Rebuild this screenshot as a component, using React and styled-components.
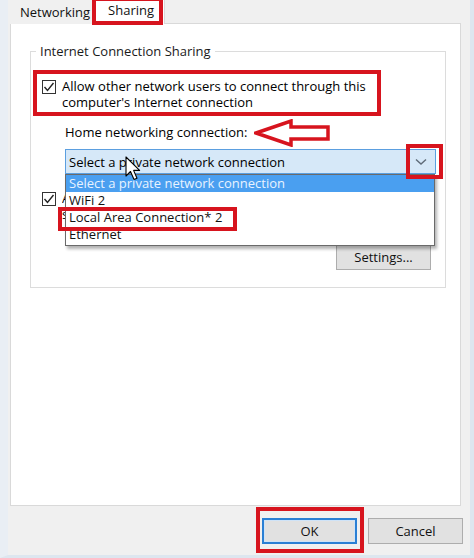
import React from 'react';
import styled, { createGlobalStyle } from 'styled-components';

const GlobalStyle = createGlobalStyle`
	* { box-sizing: border-box; }
	body {
		margin: 0;
		background: #f0f0f0;
		font-family: 'Open Sans', 'Noto Sans', sans-serif;
		font-size: 13px;
		color: #000;
	}
`;

const App = () => {
	return (
		<Window>
			<GlobalStyle />
			<TabStrip>
				<Tab>Networking</Tab>
				<Tab $active>Sharing</Tab>
			</TabStrip>

			<TabPanel>
				<GroupBox>
					<Legend>Internet Connection Sharing</Legend>
					<GroupBody>
						<CheckRow>
							<CheckBox>
								<CheckMark />
							</CheckBox>
							<CheckText>
								Allow other network users to connect through this
								<br />
								computer's Internet connection
							</CheckText>
						</CheckRow>

						<Indent>
							<FieldLabel>Home networking connection:</FieldLabel>
							<ComboWrap>
								<Combo>
									<ComboText>Select a private network connection</ComboText>
									<ComboButton>
										<svg width="12" height="8" viewBox="0 0 12 8">
											<polyline points="1,1.5 6,6 11,1.5" fill="none" stroke="#5f6b78" strokeWidth="1.4" />
										</svg>
									</ComboButton>
								</Combo>
								<DropList>
									<DropItem $selected>Select a private network connection</DropItem>
									<DropItem>WiFi 2</DropItem>
									<DropItem>Local Area Connection* 2</DropItem>
									<DropItem>Ethernet</DropItem>
								</DropList>
							</ComboWrap>
						</Indent>

						{/* label mostly hidden under the open drop-down list */}
						<CheckRow $second>
							<CheckBox>
								<CheckMark />
							</CheckBox>
							<CheckText $clipped>
								Allow other network users to control or disable the
								<br />
								shared Internet connection
							</CheckText>
						</CheckRow>

						<ButtonRow>
							<Button>Settings...</Button>
						</ButtonRow>
					</GroupBody>
				</GroupBox>
			</TabPanel>

			<Footer>
				<Button $default>OK</Button>
				<Button>Cancel</Button>
			</Footer>

			<Callout $left={92} $top={-3} $w={71} $h={28} />
			<Callout $left={33} $top={70} $w={348} $h={46} />
			<Callout $left={406} $top={144} $w={37} $h={35} />
			<Callout $left={58} $top={207} $w={179} $h={24} />
			<Callout $left={256} $top={507} $w={108} $h={46} />

			<Arrow width="78" height="28" viewBox="0 0 78 28">
				<polygon
					points="2,14 37,2 37,8 74,8 74,20 37,20 37,26"
					fill="#fff"
					stroke="#d7141e"
					strokeWidth="3.5"
					strokeLinejoin="miter"
				/>
			</Arrow>

			<Cursor width="16" height="26" viewBox="0 0 16 26">
				<path
					d="M1 1 L1 20 L5.5 15.5 L9 23.5 L12 22.2 L8.6 14.4 L14.6 14.4 Z"
					fill="#fff"
					stroke="#000"
					strokeWidth="1.1"
					strokeLinejoin="round"
				/>
			</Cursor>
		</Window>
	);
};

const CheckMark = () => (
	<svg width="12" height="12" viewBox="0 0 12 12">
		<polyline points="1.5,6 4.5,9.5 10.5,2" fill="none" stroke="#222" strokeWidth="1.4" />
	</svg>
);

const Window = styled.div`
	position: relative;
	width: 474px;
	height: 558px;
	overflow: hidden;
	background: #f0f0f0;
	border-left: 8px solid #e9eef4;
	border-right: 4px solid #dde6ef;
	border-bottom: 3px solid #dde6ef;
	display: flex;
	flex-direction: column;
`;

const TabStrip = styled.div`
	height: 24px;
	margin-left: 2px;
	display: flex;
	align-items: flex-end;
`;

const Tab = styled.div`
	height: ${(p) => (p.$active ? '26px' : '22px')};
	padding: ${(p) => (p.$active ? '0 10px 4px 12px' : '0 4px 2px 10px')};
	margin-left: ${(p) => (p.$active ? '1px' : '0')};
	display: flex;
	align-items: center;
	background: ${(p) => (p.$active ? '#fff' : '#f0f0f0')};
	border: ${(p) => (p.$active ? '1px solid #d9d9d9' : 'none')};
	border-bottom: none;
	color: #111;
	position: relative;
	z-index: 1;
`;

const TabPanel = styled.div`
	height: 483px;
	margin: -1px 9px 0 2px;
	background: #fff;
	border: 1px solid #d9d9d9;
	padding: 18px 14px 0 19px;
`;

const GroupBox = styled.fieldset`
	margin: 0;
	padding: 0;
	border: 1px solid #dcdcdc;
	min-width: 0;
`;

const Legend = styled.legend`
	margin-left: 5px;
	padding: 0 4px;
	line-height: 18px;
	color: #1a1a1a;
`;

const GroupBody = styled.div`
	padding: 18px 14px 17px 11px;
	display: flex;
	flex-direction: column;
`;

const CheckRow = styled.div`
	display: flex;
	align-items: flex-start;
	gap: 6px;
	margin-top: ${(p) => (p.$second ? '16px' : '0')};
`;

const CheckBox = styled.div`
	width: 14px;
	height: 14px;
	margin-top: 2px;
	flex: none;
	border: 1px solid #333;
	background: #fff;
	display: flex;
	align-items: center;
	justify-content: center;
`;

const CheckText = styled.div`
	line-height: 16px;
	white-space: nowrap;
	width: ${(p) => (p.$clipped ? '4px' : 'auto')};
	overflow: ${(p) => (p.$clipped ? 'hidden' : 'visible')};
`;

const Indent = styled.div`
	margin-left: 23px;
	margin-top: 14px;
	display: flex;
	flex-direction: column;
`;

const FieldLabel = styled.div`
	line-height: 16px;
`;

const ComboWrap = styled.div`
	position: relative;
	margin-top: 9px;
	width: 371px;
	z-index: 2;
`;

const Combo = styled.div`
	height: 25px;
	display: flex;
	align-items: center;
	background: #d6e8f8;
	border: 1px solid #5b9fe0;
`;

const ComboText = styled.div`
	flex: 1;
	padding-left: 3px;
	white-space: nowrap;
`;

const ComboButton = styled.div`
	width: 28px;
	height: 100%;
	display: flex;
	align-items: center;
	justify-content: center;
`;

const DropList = styled.div`
	position: absolute;
	top: 100%;
	left: 0;
	width: 370px;
	padding-bottom: 2px;
	background: #fff;
	border: 1px solid #6a6a6a;
	box-shadow: 2px 3px 3px rgba(0, 0, 0, 0.3);
`;

const DropItem = styled.div`
	height: 17px;
	line-height: 17px;
	padding-left: 3px;
	white-space: nowrap;
	background: ${(p) => (p.$selected ? '#4a9ff0' : 'transparent')};
	color: ${(p) => (p.$selected ? '#e8f3ff' : '#111')};
`;

const ButtonRow = styled.div`
	display: flex;
	justify-content: flex-end;
	margin-top: 22px;
`;

const Button = styled.button`
	width: 95px;
	height: 26px;
	font: inherit;
	color: #111;
	background: #e1e1e1;
	border: ${(p) => (p.$default ? '2px solid #2a7fd4' : '1px solid #adadad')};
	box-shadow: ${(p) => (p.$default ? 'inset 0 0 0 1px #cfe3f7' : 'none')};
	padding: 0;
`;

const Footer = styled.div`
	flex: 1;
	display: flex;
	justify-content: flex-end;
	align-items: flex-start;
	gap: 11px;
	padding: 12px 7px 0 0;
`;

const Callout = styled.div`
	position: absolute;
	left: ${(p) => p.$left - 8}px;
	top: ${(p) => p.$top}px;
	width: ${(p) => p.$w}px;
	height: ${(p) => p.$h}px;
	border: 4px solid #d7141e;
	z-index: 5;
	pointer-events: none;
`;

const Arrow = styled.svg`
	position: absolute;
	left: ${254 - 8}px;
	top: 119px;
	z-index: 5;
`;

const Cursor = styled.svg`
	position: absolute;
	left: ${125 - 8}px;
	top: 156px;
	z-index: 6;
`;

export default App;
